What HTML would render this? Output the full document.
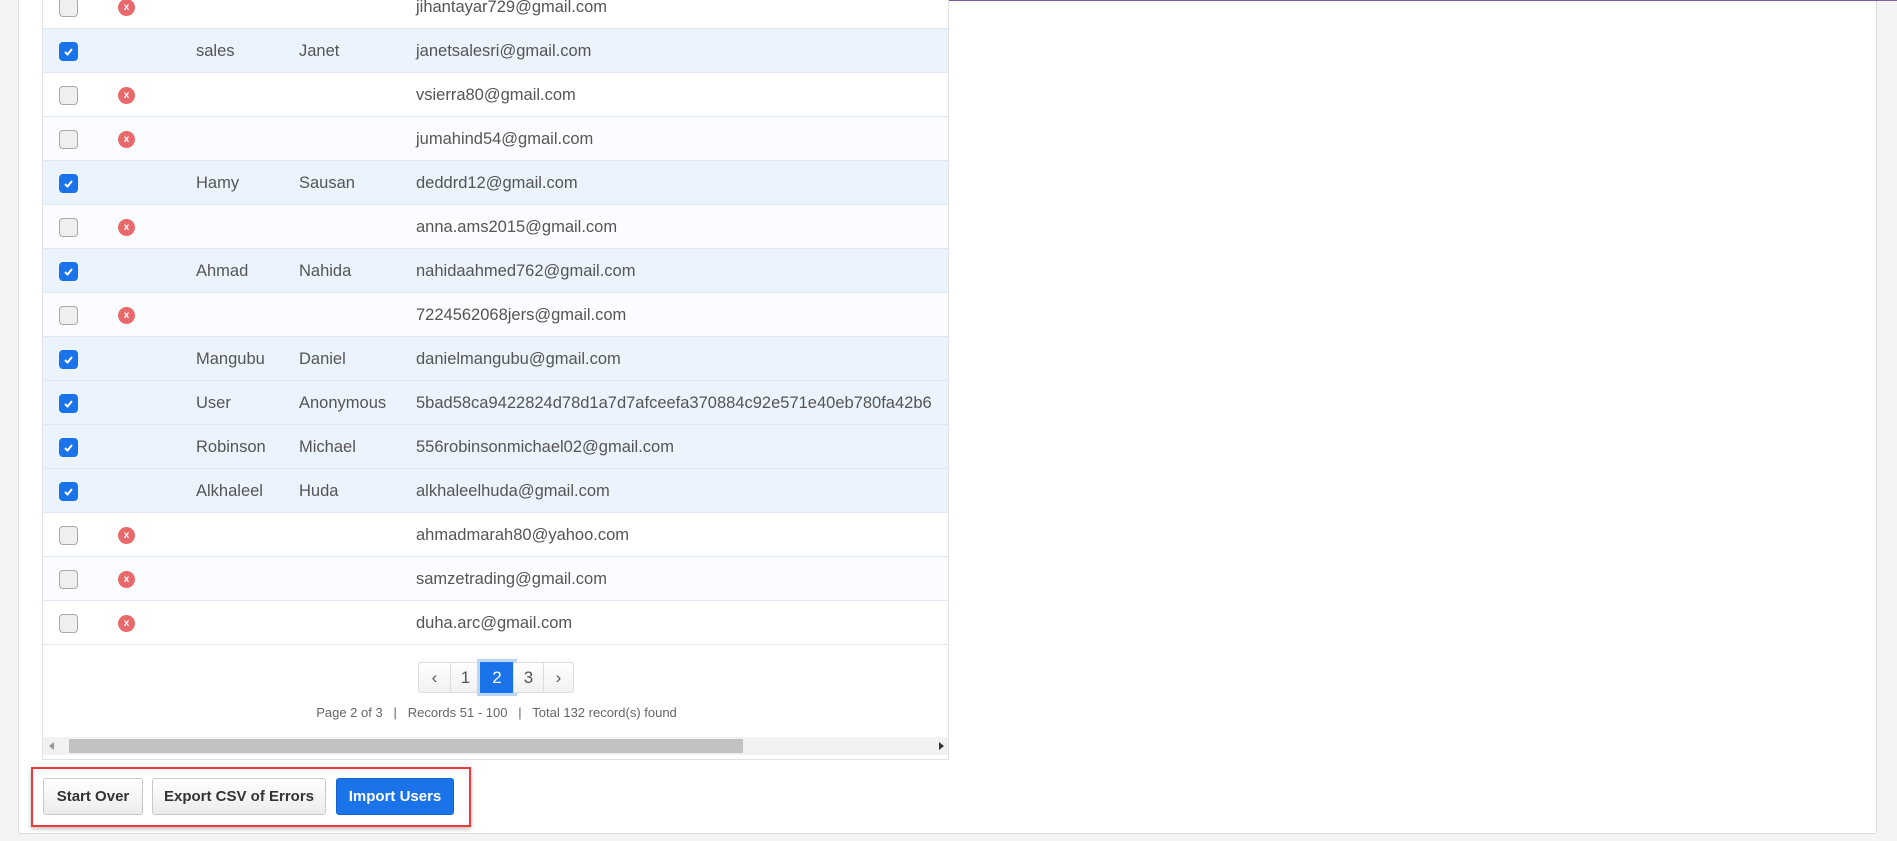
<!DOCTYPE html>
<html><head><meta charset="utf-8"><style>
*{box-sizing:border-box;margin:0;padding:0}
body{width:1897px;height:841px;background:#f4f4f5;position:relative;overflow:hidden;font-family:"Liberation Sans",sans-serif;color:#555}
.topline{position:absolute;left:949px;right:0;top:0;height:1px;background:#7a5ea8;z-index:5}
.panel{position:absolute;left:18px;top:-5px;width:1859px;height:839px;background:#fff;border:1px solid #dcdcdc;border-radius:3px}
.table{position:absolute;left:42px;top:-5px;width:907px;height:765px;border:1px solid #e2e2e2;border-top:none;background:#fff;overflow:hidden}
.row{position:absolute;left:0;width:907px;height:44px;border-bottom:1px solid #dfe9f5;font-size:16.5px;line-height:44px;white-space:nowrap}
.row.c{background:#ebf3fd}
.row.u{background:#fbfcff}
.row span{position:absolute;top:0}
.cb{position:absolute;left:16px;top:13px;width:19px;height:19px;border-radius:4px;border:1px solid #a9a9a9;background:#efefef}
.row.c .cb{background:#1a73e8;border-color:#1a73e8}
.cb svg{position:absolute;left:3px;top:3px}
.err{position:absolute;left:75px;top:14px;width:17px;height:17px;border-radius:50%;background:#e8696b;color:#fff;font-size:10px;font-weight:bold;line-height:17px;text-align:center}
.pg{position:absolute;top:667px;height:31px;border:1px solid #ddd;background:linear-gradient(#fff,#f1f1f1);font-size:17px;line-height:29px;text-align:center;color:#555}
.info{position:absolute;left:0;width:907px;top:710px;text-align:center;font-size:13px;color:#666}
.sb{position:absolute;left:0;top:742px;width:907px;height:18px;background:#f1f1f1}
.thumb{position:absolute;left:26px;top:2px;width:674px;height:14px;background:#c1c1c1}
.btn{position:absolute;top:778px;height:37px;border:1px solid #c8c8c8;border-radius:3px;background:linear-gradient(#fff,#ececec);font-size:15px;line-height:35px;text-align:center;color:#333;font-weight:bold}
.red{position:absolute;left:31px;top:767px;width:440px;height:60px;border:2px solid #ef3b3b;box-shadow:0 2px 4px rgba(0,0,0,.25)}
</style></head><body>
<div class="topline"></div>
<div class="panel"></div>
<div class="table">
<div class="row" style="top:-10px"><div class="cb"></div><div class="err">x</div><span style="left:373px">jihantayar729@gmail.com</span></div>
<div class="row c" style="top:34px"><div class="cb"><svg width="11" height="11" viewBox="0 0 11 11"><path d="M2 6l2.5 2.5L9 3" stroke="#fff" stroke-width="2" fill="none"/></svg></div><span style="left:153px">sales</span><span style="left:256px">Janet</span><span style="left:373px">janetsalesri@gmail.com</span></div>
<div class="row" style="top:78px"><div class="cb"></div><div class="err">x</div><span style="left:373px">vsierra80@gmail.com</span></div>
<div class="row u" style="top:122px"><div class="cb"></div><div class="err">x</div><span style="left:373px">jumahind54@gmail.com</span></div>
<div class="row c" style="top:166px"><div class="cb"><svg width="11" height="11" viewBox="0 0 11 11"><path d="M2 6l2.5 2.5L9 3" stroke="#fff" stroke-width="2" fill="none"/></svg></div><span style="left:153px">Hamy</span><span style="left:256px">Sausan</span><span style="left:373px">deddrd12@gmail.com</span></div>
<div class="row u" style="top:210px"><div class="cb"></div><div class="err">x</div><span style="left:373px">anna.ams2015@gmail.com</span></div>
<div class="row c" style="top:254px"><div class="cb"><svg width="11" height="11" viewBox="0 0 11 11"><path d="M2 6l2.5 2.5L9 3" stroke="#fff" stroke-width="2" fill="none"/></svg></div><span style="left:153px">Ahmad</span><span style="left:256px">Nahida</span><span style="left:373px">nahidaahmed762@gmail.com</span></div>
<div class="row u" style="top:298px"><div class="cb"></div><div class="err">x</div><span style="left:373px">7224562068jers@gmail.com</span></div>
<div class="row c" style="top:342px"><div class="cb"><svg width="11" height="11" viewBox="0 0 11 11"><path d="M2 6l2.5 2.5L9 3" stroke="#fff" stroke-width="2" fill="none"/></svg></div><span style="left:153px">Mangubu</span><span style="left:256px">Daniel</span><span style="left:373px">danielmangubu@gmail.com</span></div>
<div class="row c" style="top:386px"><div class="cb"><svg width="11" height="11" viewBox="0 0 11 11"><path d="M2 6l2.5 2.5L9 3" stroke="#fff" stroke-width="2" fill="none"/></svg></div><span style="left:153px">User</span><span style="left:256px">Anonymous</span><span style="left:373px">5bad58ca9422824d78d1a7d7afceefa370884c92e571e40eb780fa42b6</span></div>
<div class="row c" style="top:430px"><div class="cb"><svg width="11" height="11" viewBox="0 0 11 11"><path d="M2 6l2.5 2.5L9 3" stroke="#fff" stroke-width="2" fill="none"/></svg></div><span style="left:153px">Robinson</span><span style="left:256px">Michael</span><span style="left:373px">556robinsonmichael02@gmail.com</span></div>
<div class="row c" style="top:474px"><div class="cb"><svg width="11" height="11" viewBox="0 0 11 11"><path d="M2 6l2.5 2.5L9 3" stroke="#fff" stroke-width="2" fill="none"/></svg></div><span style="left:153px">Alkhaleel</span><span style="left:256px">Huda</span><span style="left:373px">alkhaleelhuda@gmail.com</span></div>
<div class="row" style="top:518px"><div class="cb"></div><div class="err">x</div><span style="left:373px">ahmadmarah80@yahoo.com</span></div>
<div class="row u" style="top:562px"><div class="cb"></div><div class="err">x</div><span style="left:373px">samzetrading@gmail.com</span></div>
<div class="row" style="top:606px"><div class="cb"></div><div class="err">x</div><span style="left:373px">duha.arc@gmail.com</span></div>
<div class="pg" style="left:375px;width:33px;border-radius:3px 0 0 3px">‹</div>
<div class="pg" style="left:407px;width:31px">1</div>
<div class="pg" style="left:437px;width:34px;background:#1a73e8;color:#fff;border-color:#1a73e8;box-shadow:0 0 0 3px #bcd6f7">2</div>
<div class="pg" style="left:470px;width:31px">3</div>
<div class="pg" style="left:500px;width:31px;border-radius:0 3px 3px 0">›</div>
<div class="info">Page 2 of 3 &nbsp;&nbsp;|&nbsp;&nbsp; Records 51 - 100 &nbsp;&nbsp;|&nbsp;&nbsp; Total 132 record(s) found</div>
<div class="sb"><div class="thumb"></div><div style="position:absolute;left:6px;top:5px;border:4px solid transparent;border-right:5px solid #999;border-left:none"></div><div style="position:absolute;right:6px;top:5px;border:4px solid transparent;border-left:5px solid #333;border-right:none"></div></div>
</div>
<div class="red"></div>
<div class="btn" style="left:43px;width:100px">Start Over</div>
<div class="btn" style="left:152px;width:174px">Export CSV of Errors</div>
<div class="btn" style="left:336px;width:118px;background:#1a73e8;border-color:#1565d0;color:#fff">Import Users</div>
</body></html>
